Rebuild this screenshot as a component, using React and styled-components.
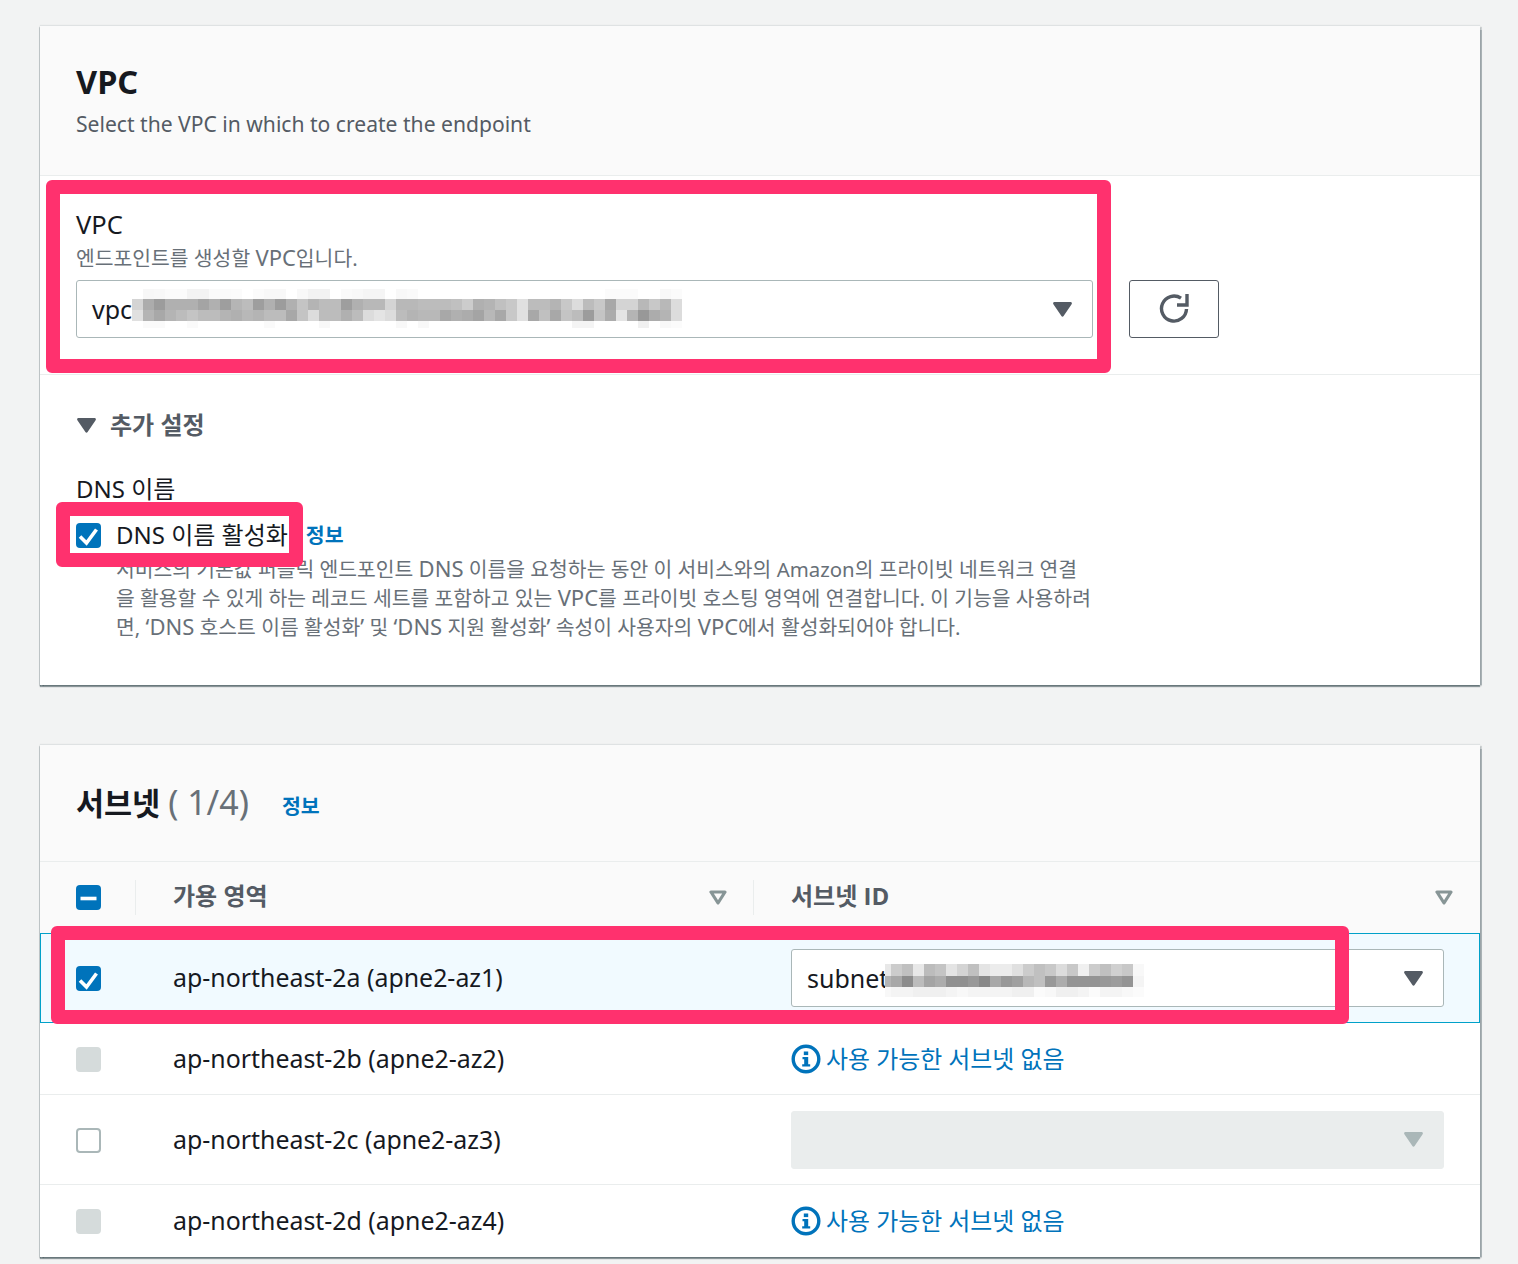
import styled, { createGlobalStyle } from "styled-components";

const GlobalStyle = createGlobalStyle`
  html, body {
    margin: 0;
    padding: 0;
    background: #f2f3f3;
    color: #16191f;
    font-family: "Noto Sans", "Noto Sans CJK KR", sans-serif;
    font-size: 24px;
    overflow: hidden;
  }
`;

const Page = styled.div`
  display: flex;
  flex-direction: column;
  gap: 60px;
  padding: 26px 38px 7px 40px;
`;

const Card = styled.section`
  position: relative;
  background: #fff;
  box-shadow: 0 2px 1px 0 rgba(0, 28, 36, 0.4), 1.5px 1px 1px 0 rgba(0, 28, 36, 0.3),
    -1.5px 1px 1px 0 rgba(0, 28, 36, 0.3), 0 -1px 1px 0 rgba(0, 28, 36, 0.08);
`;

const CardHead = styled.header`
  background: #fafafa;
  border-bottom: 1px solid #eaeded;
  padding: 36px 36px 35px;
`;

const SubnetHead = styled(CardHead)`
  display: flex;
  align-items: center;
  padding: 37px 36px 39px;
`;

const Title = styled.h2`
  margin: 0;
  height: 40px;
  font-size: ${(p) => p.$size}px;
  line-height: 40px;
  font-weight: 700;
`;

const Count = styled.span`
  font-size: 34px;
  font-weight: 400;
  color: #687078;
`;

const HeadText = styled.p`
  margin: 6px 0 0;
  line-height: 32px;
  font-size: 21.1px;
  color: #545b64;
`;

const InfoLink = styled.a`
  color: #0073bb;
  font-size: 20.5px;
  font-weight: 700;
  line-height: 32px;
  margin: ${(p) => p.$drop}px 0 0 ${(p) => p.$gap}px;
`;

const FormRow = styled.div`
  display: flex;
  align-items: flex-end;
  gap: 36px;
  padding: 32px 36px 36px;
  border-bottom: 1px solid #eaeded;
`;

const Field = styled.div`
  width: 1017px;
`;

const Label = styled.div`
  font-size: 25.5px;
  line-height: 32px;
`;

const Latin = styled.span`
  font-size: 22px;
`;

const Hint = styled.div`
  height: 30px;
  margin: 2px 0 8px;
  font-size: 20.4px;
  line-height: 30px;
  color: #687078;
`;

const Select = styled.div`
  box-sizing: border-box;
  display: flex;
  align-items: center;
  justify-content: flex-end;
  height: 58px;
  padding: 0 20px 0 15px;
  font-size: 25px;
  background: ${(p) => (p.$disabled ? "#eaeded" : "#fff")};
  border: 1px solid ${(p) => (p.$disabled ? "#eaeded" : "#aab7b8")};
  border-radius: 3px;
`;

const SelectValue = styled.div`
  display: flex;
  align-items: center;
  flex: 1;
  line-height: 32px;
`;

const ArrowIcon = styled.svg`
  flex: none;
  width: 19px;
  height: 15px;
  fill: ${(p) => p.$color};
`;

const Blur = styled.svg`
  display: block;
  flex: none;
  margin: ${(p) => p.$top}px 0 ${(p) => p.$bottom}px ${(p) => p.$gap}px;
`;

const RefreshButton = styled.button`
  display: flex;
  align-items: center;
  justify-content: center;
  width: 90px;
  height: 58px;
  padding: 0;
  background: #fff;
  border: 1px solid #545b64;
  border-radius: 3px;
`;

const Extra = styled.div`
  padding: 34px 36px 43px;
`;

const Disclosure = styled.div`
  display: flex;
  align-items: center;
  gap: 14px;
  padding-left: 1px;
  line-height: 32px;
  font-weight: 700;
  color: #545b64;
`;

const DnsLabel = styled(Label)`
  margin-top: 32px;
  font-size: 24px;
`;

const CheckRow = styled.div`
  display: flex;
  align-items: center;
  gap: 15px;
  margin-top: 14px;
  line-height: 32px;
`;

const CheckDesc = styled.div`
  margin: 3px 0 1px 40px;
  font-size: 20.4px;
  color: #687078;
  white-space: nowrap;
`;

const DescLine = styled.div`
  height: 29px;
  line-height: 29px;
`;

const Box = styled.span`
  box-sizing: border-box;
  flex: none;
  display: block;
  width: 25px;
  height: 25px;
  border-radius: 4px;
  background: ${(p) => (p.$state === "disabled" ? "#d5dbdb" : p.$state === "empty" ? "#fff" : "#0073bb")};
  border: ${(p) => (p.$state === "empty" ? "2px solid #aab7b8" : "none")};
`;

const HeadRow = styled.div`
  display: grid;
  grid-template-columns: 95px 618px 1fr;
  align-items: center;
  height: 71px;
  background: #fafafa;
`;

const BoxCell = styled.div`
  padding-left: 36px;
`;

const RowBoxCell = styled(BoxCell)`
  padding-top: 2px;
`;

const HeadCell = styled.div`
  display: flex;
  align-items: center;
  justify-content: space-between;
  height: 35px;
  padding: 0 ${(p) => p.$right}px 0 37px;
  border-left: 1px solid #eaeded;
  font-family: "Open Sans", "Noto Sans CJK KR", sans-serif;
  line-height: 32px;
  font-weight: 700;
  color: #545b64;
`;

const HeadLabel = styled.span`
  margin-bottom: 3px;
`;

const Row = styled.div`
  display: grid;
  grid-template-columns: 133px 618px 1fr;
  align-items: center;
  height: ${(p) => p.$height}px;
  padding-right: 36px;
  box-sizing: border-box;
  background: ${(p) => (p.$selected ? "#f1faff" : "#fff")};
  box-shadow: ${(p) => (p.$selected ? "inset 0 0 0 1px #00a1c9" : "none")};
  border-bottom: ${(p) => (p.$last || p.$selected ? "none" : "1px solid #eaeded")};
`;

const ZoneName = styled.span`
  font-size: 24.9px;
  line-height: 32px;
  margin-bottom: 2px;
`;

const NoSubnet = styled.div`
  display: flex;
  align-items: center;
  gap: 5px;
  font-size: 23.9px;
  line-height: 32px;
  color: #0073bb;
`;

const Highlight = styled.div`
  position: absolute;
  box-sizing: border-box;
  left: ${(p) => p.$x}px;
  top: ${(p) => p.$y}px;
  width: ${(p) => p.$w}px;
  height: ${(p) => p.$h}px;
  border: 14px solid #ff316e;
  border-radius: 6px;
  pointer-events: none;
`;

const vpcBlur = [
  "ff f7 f8 fb fb f3 f3 fa fa fb ff fb f8 f8 ff f8 f2 f2 ff fa f8 f5 f5 ff f8 fa ff ff ff ff ff ff ff ff ff ff ff ff ff ff ff ff ff fb fb fb ff ff f8 fb",
  "d4 ac 9c b0 b0 b0 a4 b0 9e b5 bc 9e b0 9c b0 c4 b4 bc bc 9e b0 b8 b8 d4 b8 b8 bc bc bc c0 cc b0 b4 c0 c8 e0 bc bc b4 c8 dc bc c8 a8 d4 d4 b8 c8 b8 dc",
  "e0 b4 a8 b4 bc c4 bc bc b4 b0 b8 b4 bc bc a8 c4 dc bc bc b0 bc dc e4 dc bc b4 b8 b8 a8 b0 ac a4 b8 a8 c8 e0 a8 c0 a8 c4 bc 9c c4 ac e4 b4 98 ac b4 dc",
  "ff fa fa ff ff fa ff ff ff ff ff ff fa ff ff ff ff f8 ff ff ff ff ff ff f8 ff f8 ff ff ff ff ff ff ff ff ff ff ff ff ff f4 f4 ff ff ff ff f0 ff f8 fb",
];

const subnetBlur = [
  "e8 cc c0 e8 bc c4 e4 d4 c0 e4 ec ec e0 cc c0 c8 dc c8 f0 cc c0 d0 c8 f8",
  "b4 a8 8c bc a4 ac 90 90 98 88 a8 98 a0 b8 c0 98 ac 94 94 94 98 9c 94 f4",
  "f8 f4 f4 f0 f0 f0 f4 f8 f4 f4 f4 f4 f0 f0 fb f8 f0 f0 f4 fb f4 f4 f8 fb",
];

function BlurredId({ rows, heights, start, gap, top = 0, bottom = 0 }) {
  const cols = rows[0].split(" ").length;
  const height = heights.reduce((a, b) => a + b, 0);
  let y = 0;
  return (
    <Blur $gap={gap} $top={top} $bottom={bottom} width={cols * 11 + start} height={height} shapeRendering="crispEdges">
      {rows.map((row, r) => {
        const rowTop = y;
        y += heights[r];
        return row.split(" ").map((v, c) => (
          <rect key={`${r}-${c}`} x={start + c * 11} y={rowTop} width="11" height={heights[r]} fill={`#${v}${v}${v}`} />
        ));
      })}
    </Blur>
  );
}

function DownArrow({ color = "#545b64" }) {
  return (
    <ArrowIcon $color={color} viewBox="0 0 19 15">
      <path d="M1.5 0h16c1.2 0 1.8 1.2 1.1 2.2l-8 11.800c-.6.9-1.600.9-2.200 0L.4 2.200C-.3 1.200.3 0 1.500 0z" />
    </ArrowIcon>
  );
}

function FilterIcon() {
  return (
    <svg width="18" height="16" viewBox="0 0 18 16">
      <path d="M2 2h14l-7 11z" fill="none" stroke="#879596" strokeWidth="3.2" strokeLinejoin="round" />
    </svg>
  );
}

function Checkbox({ state }) {
  return (
    <Box $state={state}>
      {state === "checked" && (
        <svg width="25" height="25" viewBox="0 0 25 25">
          <path d="M4 13.500l6.500 6.500L20.500 6.500" fill="none" stroke="#fff" strokeWidth="3.6" />
        </svg>
      )}
      {state === "mixed" && (
        <svg width="25" height="25" viewBox="0 0 25 25">
          <path d="M4.500 12.500h16" fill="none" stroke="#fff" strokeWidth="3.6" />
        </svg>
      )}
    </Box>
  );
}

function InfoIcon() {
  return (
    <svg width="30" height="30" viewBox="0 0 30 30">
      <circle cx="15" cy="15" r="12.800" fill="none" stroke="#0073bb" strokeWidth="3.400" />
      <rect x="12.800" y="7.500" width="4.400" height="3.600" fill="#0073bb" />
      <path d="M11.500 13h5.700v7.200h2v2.300h-8v-2.300h2v-4.900h-1.700z" fill="#0073bb" />
    </svg>
  );
}

function NoSubnetNote() {
  return (
    <NoSubnet>
      <InfoIcon />
      사용 가능한 서브넷 없음
    </NoSubnet>
  );
}

export default function App() {
  return (
    <>
      <GlobalStyle />
      <Page>
        <Card>
          <CardHead>
            <Title $size={32.5}>VPC</Title>
            <HeadText>Select the VPC in which to create the endpoint</HeadText>
          </CardHead>
          <FormRow>
            <Field>
              <Label>VPC</Label>
              <Hint>
                엔드포인트를 생성할 <Latin>VPC</Latin>입니다.
              </Hint>
              <Select>
                <SelectValue>
                  vpc
                  <BlurredId rows={vpcBlur} heights={[10, 11, 11, 7]} start={0} gap={0} bottom={1} />
                </SelectValue>
                <DownArrow />
              </Select>
            </Field>
            <RefreshButton aria-label="새로 고침">
              <svg width="30" height="30" viewBox="0 0 30 30">
                <path d="M27.500 15A12.500 12.500 0 1 1 22 4.200" fill="none" stroke="#545b64" strokeWidth="3.400" />
                <path d="M28 0v11H18" fill="none" stroke="#545b64" strokeWidth="3.400" />
              </svg>
            </RefreshButton>
          </FormRow>
          <Extra>
            <Disclosure>
              <DownArrow />
              추가 설정
            </Disclosure>
            <DnsLabel>DNS 이름</DnsLabel>
            <CheckRow>
              <Checkbox state="checked" />
              DNS 이름 활성화
              <InfoLink $gap={3} $drop={0}>정보</InfoLink>
            </CheckRow>
            <CheckDesc>
              <DescLine>
                서비스의 기본값 퍼블릭 엔드포인트 <Latin>DNS</Latin> 이름을 요청하는 동안 이 서비스와의 Amazon의 프라이빗 네트워크 연결
              </DescLine>
              <DescLine>
                을 활용할 수 있게 하는 레코드 세트를 포함하고 있는 <Latin>VPC</Latin>를 프라이빗 호스팅 영역에 연결합니다. 이 기능을 사용하려
              </DescLine>
              <DescLine>
                면, <Latin>‘DNS</Latin> 호스트 이름 활성화<Latin>’</Latin> 및 <Latin>‘DNS</Latin> 지원 활성화<Latin>’</Latin> 속성이 사용자의 <Latin>VPC</Latin>에서 활성화되어야 합니다.
              </DescLine>
            </CheckDesc>
          </Extra>
          <Highlight $x={6} $y={154} $w={1065} $h={193} />
          <Highlight $x={16} $y={476} $w={247} $h={65} />
        </Card>
        <Card>
          <SubnetHead>
            <Title $size={30.5}>
              서브넷 <Count>( 1/4)</Count>
            </Title>
            <InfoLink $gap={33} $drop={8}>정보</InfoLink>
          </SubnetHead>
          <HeadRow>
            <BoxCell>
              <Checkbox state="mixed" />
            </BoxCell>
            <HeadCell $right={26}>
              <HeadLabel>가용 영역</HeadLabel>
              <FilterIcon />
            </HeadCell>
            <HeadCell $right={27}>
              <HeadLabel>서브넷 ID</HeadLabel>
              <FilterIcon />
            </HeadCell>
          </HeadRow>
          <Row $selected $height={90}>
            <BoxCell>
              <Checkbox state="checked" />
            </BoxCell>
            <ZoneName>ap-northeast-2a (apne2-az1)</ZoneName>
            <Select>
              <SelectValue>
                subnet
                <BlurredId rows={subnetBlur} heights={[12, 11, 10]} start={-5} gap={-3} top={5} />
              </SelectValue>
              <DownArrow />
            </Select>
          </Row>
          <Row $height={72}>
            <RowBoxCell>
              <Checkbox state="disabled" />
            </RowBoxCell>
            <ZoneName>ap-northeast-2b (apne2-az2)</ZoneName>
            <NoSubnetNote />
          </Row>
          <Row $height={90}>
            <RowBoxCell>
              <Checkbox state="empty" />
            </RowBoxCell>
            <ZoneName>ap-northeast-2c (apne2-az3)</ZoneName>
            <Select $disabled>
              <DownArrow color="#aab7b8" />
            </Select>
          </Row>
          <Row $last $height={72}>
            <BoxCell>
              <Checkbox state="disabled" />
            </BoxCell>
            <ZoneName>ap-northeast-2d (apne2-az4)</ZoneName>
            <NoSubnetNote />
          </Row>
          <Highlight $x={11} $y={181} $w={1298} $h={98} />
        </Card>
      </Page>
    </>
  );
}
